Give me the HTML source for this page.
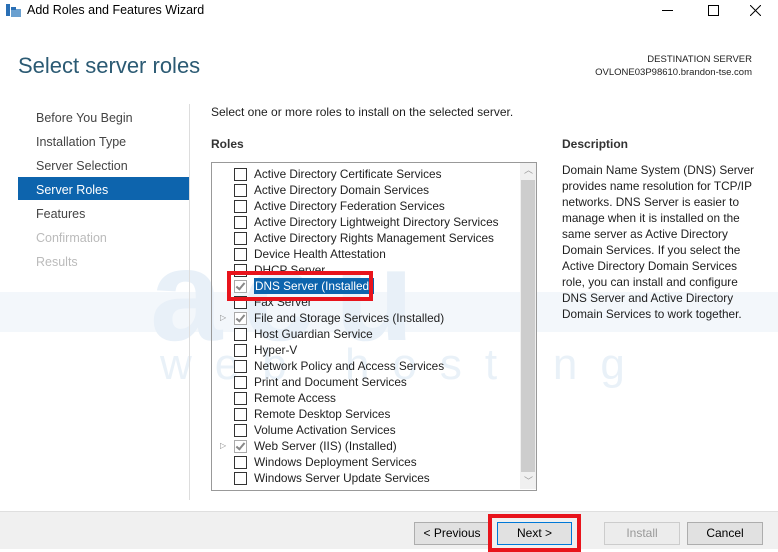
<!DOCTYPE html>
<html><head><style>
body{margin:0;width:778px;height:548px;background:#fff;font-family:"Liberation Sans",sans-serif;position:relative;overflow:hidden;color:#1e1e1e}
.a{position:absolute;white-space:nowrap}
.nav{font-size:12.5px;color:#444}
.row{position:absolute;left:234px;font-size:11.8px;height:16px;line-height:16px;white-space:nowrap}
.cb{position:absolute;left:0;top:2px;width:11px;height:11px;border:1px solid #333;background:#fff}
.cb.chk{border-color:#aaa;background:#fff}
.cb.chk:after{content:"";position:absolute;left:3px;top:0px;width:3px;height:7px;border:solid #888;border-width:0 2px 2px 0;transform:rotate(40deg)}
.t{position:absolute;left:20px;top:0}
.btn{position:absolute;top:522px;height:21px;border:1px solid #adadad;background:#e1e1e1;font-size:12px;text-align:center;line-height:21px;color:#000}
.desc{font-size:11.8px;line-height:16px;color:#1e1e1e}
.wm{position:absolute;color:#e8f0f8;font-weight:bold}
</style></head><body>
<!-- watermark -->
<div class="a" style="left:0;top:292px;width:778px;height:40px;background:#f3f7fb"></div>
<div class="wm a" style="left:150px;top:230px;font-size:130px;line-height:130px;letter-spacing:20px">acu</div>
<div class="a" style="left:160px;top:340px;font-size:44px;color:#e9f1f8;letter-spacing:23px">web hosting</div>

<!-- title bar -->
<svg class="a" style="left:6px;top:4px" width="16" height="14"><rect x="0" y="0" width="4" height="12" fill="#2a6fb5"/><rect x="5" y="5" width="10" height="8" fill="#6aa0d0"/><rect x="5" y="3" width="5" height="3" fill="#2a6fb5"/></svg>
<div class="a" style="left:27px;top:3px;font-size:12.5px;color:#000">Add Roles and Features Wizard</div>
<div class="a" style="left:662px;top:10px;width:11px;height:1px;background:#000"></div>
<div class="a" style="left:708px;top:5px;width:9px;height:9px;border:1px solid #000"></div>
<svg class="a" style="left:750px;top:5px" width="11" height="11"><path d="M0 0L11 11M11 0L0 11" stroke="#000" stroke-width="1"/></svg>

<div class="a" style="left:18px;top:53px;font-size:22px;color:#2b5a73;font-weight:300">Select server roles</div>
<div class="a" style="right:26px;top:53px;font-size:9.5px;color:#222;text-align:right;line-height:13px">DESTINATION SERVER<br>OVLONE03P98610.brandon-tse.com</div>

<!-- nav -->
<div class="a" style="left:189px;top:104px;width:1px;height:396px;background:#ddd"></div>
<div class="a nav" style="left:36px;top:111px">Before You Begin</div>
<div class="a nav" style="left:36px;top:135px">Installation Type</div>
<div class="a nav" style="left:36px;top:159px">Server Selection</div>
<div class="a" style="left:18px;top:177px;width:171px;height:23px;background:#0d64ad"></div>
<div class="a nav" style="left:36px;top:183px;color:#fff">Server Roles</div>
<div class="a nav" style="left:36px;top:207px">Features</div>
<div class="a nav" style="left:36px;top:231px;color:#bbb">Confirmation</div>
<div class="a nav" style="left:36px;top:255px;color:#bbb">Results</div>

<div class="a" style="left:211px;top:105px;font-size:12px">Select one or more roles to install on the selected server.</div>
<div class="a" style="left:211px;top:137px;font-size:12px;font-weight:bold;color:#333">Roles</div>
<div class="a" style="left:562px;top:137px;font-size:12px;font-weight:bold;color:#333">Description</div>

<!-- list -->
<div class="a" style="left:211px;top:162px;width:324px;height:327px;border:1px solid #999"></div>
<div class="a" style="left:520px;top:163px;width:16px;height:326px;background:#f0f0f0"></div>
<div class="a" style="left:521px;top:180px;width:14px;height:292px;background:#cdcdcd"></div>
<div class="a" style="left:524px;top:163px;font-size:9px;color:#999">︿</div>
<div class="a" style="left:524px;top:474px;font-size:9px;color:#999">﹀</div>

<div class="row" style="top:166px"><div class="cb"></div><div class="t">Active Directory Certificate Services</div></div>
<div class="row" style="top:182px"><div class="cb"></div><div class="t">Active Directory Domain Services</div></div>
<div class="row" style="top:198px"><div class="cb"></div><div class="t">Active Directory Federation Services</div></div>
<div class="row" style="top:214px"><div class="cb"></div><div class="t">Active Directory Lightweight Directory Services</div></div>
<div class="row" style="top:230px"><div class="cb"></div><div class="t">Active Directory Rights Management Services</div></div>
<div class="row" style="top:246px"><div class="cb"></div><div class="t">Device Health Attestation</div></div>
<div class="row" style="top:262px"><div class="cb"></div><div class="t">DHCP Server</div></div>
<div class="row" style="top:278px"><div class="cb chk"></div><div class="t" style="background:#0d64ad;color:#fff;padding:0 1px">DNS Server (Installed)</div></div>
<div class="row" style="top:294px"><div class="cb"></div><div class="t">Fax Server</div></div>
<div class="row" style="top:310px"><span style="position:absolute;left:-14px;font-size:8px;color:#888">▷</span><div class="cb chk"></div><div class="t">File and Storage Services (Installed)</div></div>
<div class="row" style="top:326px"><div class="cb"></div><div class="t">Host Guardian Service</div></div>
<div class="row" style="top:342px"><div class="cb"></div><div class="t">Hyper-V</div></div>
<div class="row" style="top:358px"><div class="cb"></div><div class="t">Network Policy and Access Services</div></div>
<div class="row" style="top:374px"><div class="cb"></div><div class="t">Print and Document Services</div></div>
<div class="row" style="top:390px"><div class="cb"></div><div class="t">Remote Access</div></div>
<div class="row" style="top:406px"><div class="cb"></div><div class="t">Remote Desktop Services</div></div>
<div class="row" style="top:422px"><div class="cb"></div><div class="t">Volume Activation Services</div></div>
<div class="row" style="top:438px"><span style="position:absolute;left:-14px;font-size:8px;color:#888">▷</span><div class="cb chk"></div><div class="t">Web Server (IIS) (Installed)</div></div>
<div class="row" style="top:454px"><div class="cb"></div><div class="t">Windows Deployment Services</div></div>
<div class="row" style="top:470px"><div class="cb"></div><div class="t">Windows Server Update Services</div></div>

<div class="a" style="left:227px;top:271px;width:138px;height:22px;border:4px solid #e8141c"></div>

<div class="a desc" style="left:562px;top:162px">Domain Name System (DNS) Server<br>provides name resolution for TCP/IP<br>networks. DNS Server is easier to<br>manage when it is installed on the<br>same server as Active Directory<br>Domain Services. If you select the<br>Active Directory Domain Services<br>role, you can install and configure<br>DNS Server and Active Directory<br>Domain Services to work together.</div>

<!-- footer -->
<div class="a" style="left:0;top:511px;width:778px;height:37px;background:#f0f0f0;border-top:1px solid #dfdfdf"></div>
<div class="btn" style="left:414px;width:74px">&lt; Previous</div>
<div class="btn" style="left:497px;width:73px;border-color:#0078d7">Next &gt;</div>
<div class="a" style="left:488px;top:514px;width:85px;height:30px;border:4px solid #e8141c"></div>
<div class="btn" style="left:604px;width:74px;background:#ececec;border-color:#ccc;color:#999">Install</div>
<div class="btn" style="left:687px;width:74px">Cancel</div>
</body></html>
